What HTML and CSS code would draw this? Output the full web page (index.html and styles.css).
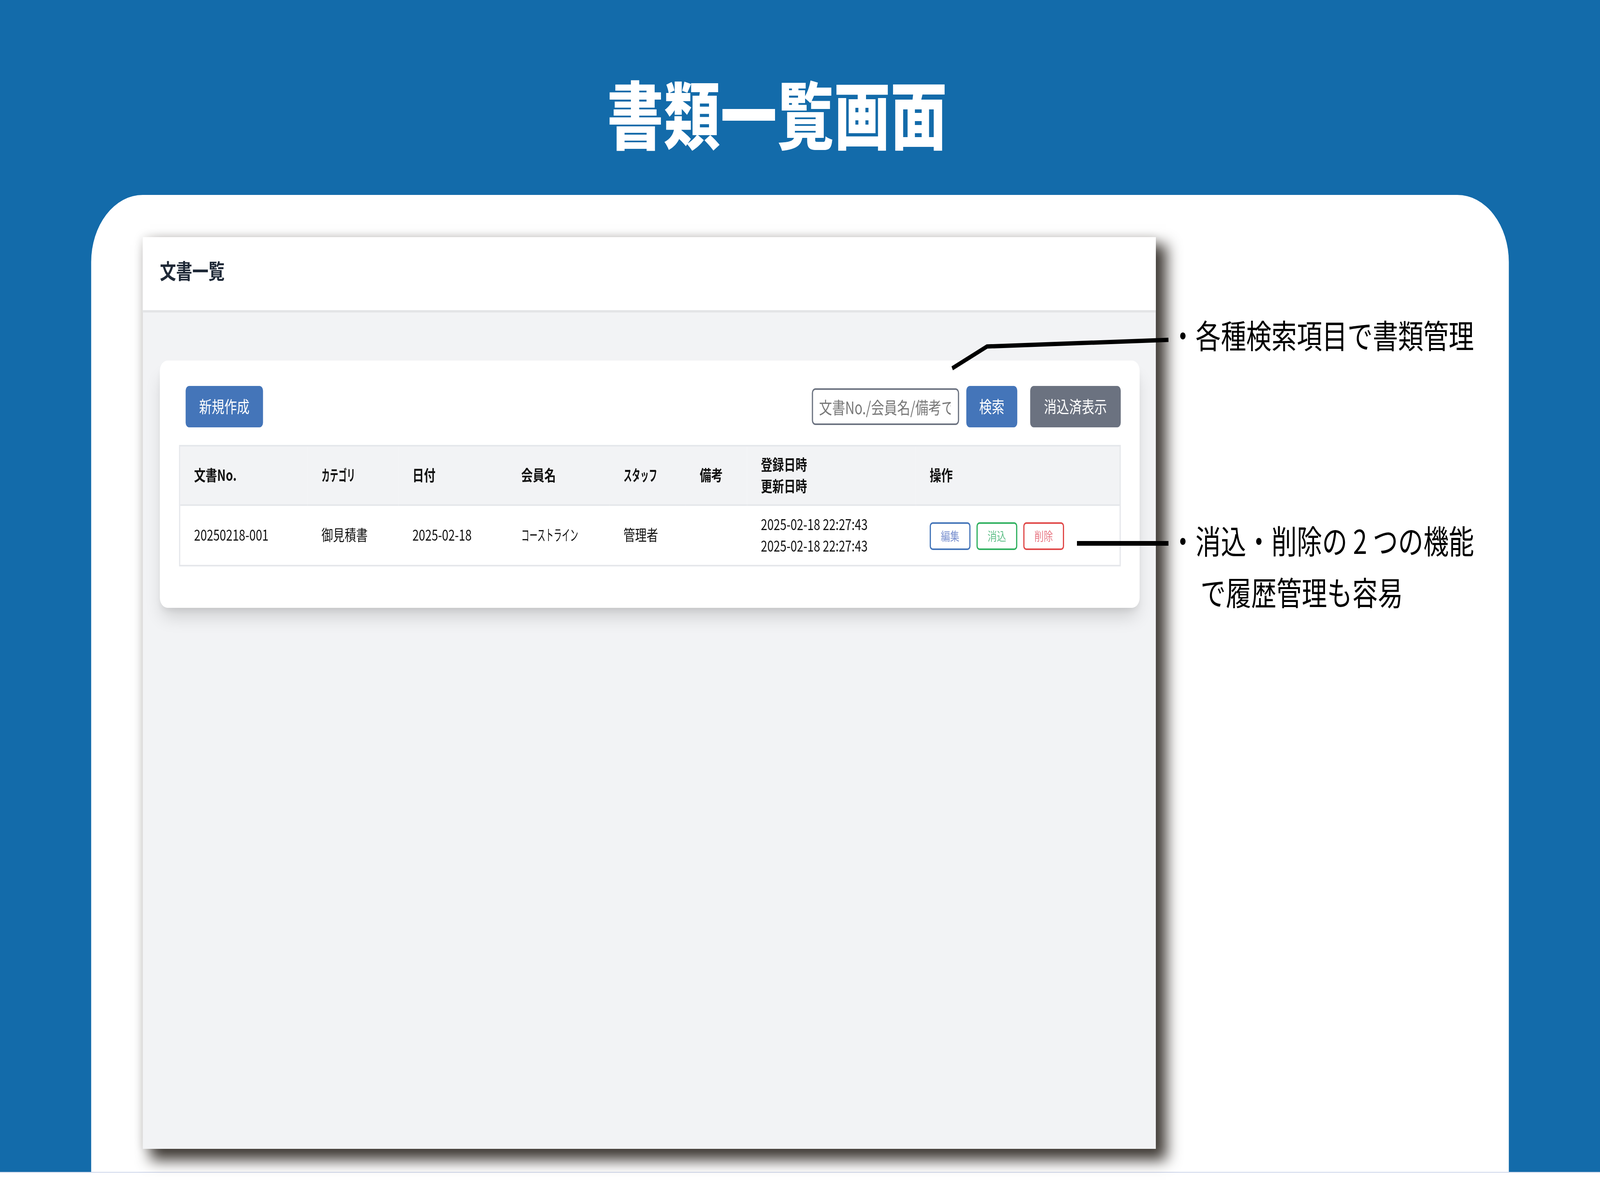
FILE: index.html
```html
<!DOCTYPE html>
<html lang="ja">
<head>
<meta charset="utf-8">
<title>書類一覧画面</title>
<link rel="stylesheet" href="styles.css">
</head>
<body>
<div class="slide">
  <h1 class="slide-title">書類一覧画面</h1>
  <main class="panel">
    <section class="screen">
      <header class="screen-header"><h2 class="screen-title">文書一覧</h2></header>
      <div class="screen-body">
        <div class="card">
          <div class="toolbar">
            <button class="btn btn-primary btn-new">新規作成</button>
            <div class="toolbar-search">
              <input class="search-input" type="text" placeholder="文書No./会員名/備考で検索">
              <button class="btn btn-primary btn-search">検索</button>
              <button class="btn btn-gray btn-cleared">消込済表示</button>
            </div>
          </div>
          <table class="doc-table">
            <colgroup>
              <col class="c1"><col class="c2"><col class="c3"><col class="c4"><col class="c5"><col class="c6"><col class="c7"><col class="c8">
            </colgroup>
            <thead>
              <tr>
                <th>文書No.</th><th><span class="narrow">カテゴリ</span></th><th>日付</th><th>会員名</th><th><span class="narrow">スタッフ</span></th><th>備考</th><th>登録日時<br>更新日時</th><th>操作</th>
              </tr>
            </thead>
            <tbody>
              <tr>
                <td>20250218-001</td><td>御見積書</td><td>2025-02-18</td><td><span class="narrow narrow-name">コーストライン</span></td><td>管理者</td><td></td>
                <td>2025-02-18 22:27:43<br>2025-02-18 22:27:43</td>
                <td>
                  <div class="actions">
                    <button class="act act-edit">編集</button>
                    <button class="act act-clear">消込</button>
                    <button class="act act-del">削除</button>
                  </div>
                </td>
              </tr>
            </tbody>
          </table>
        </div>
      </div>
    </section>
    <aside class="notes">
      <p class="note note-search">・各種検索項目で書類管理</p>
      <p class="note note-history">・消込・削除の 2 つの機能<span class="note-cont">で履歴管理も容易</span></p>
    </aside>
  </main>
  <svg class="callouts" width="5335" height="3031" viewBox="0 0 5335 3031" aria-hidden="true">
    <polyline points="3175,943 3291,887 3896,870" fill="none" stroke="#000" stroke-width="11"/>
    <line x1="3591" y1="1391" x2="3896" y2="1391" stroke="#000" stroke-width="12"/>
  </svg>
</div>
</body>
</html>
```
FILE: styles.css
```css
* { box-sizing: border-box; }
html { overflow: hidden; }
html, body { margin: 0; padding: 0; background: #fff; }
body {
  width: 100vw;
  height: 3031px;
  overflow: hidden;
  font-family: "Noto Sans CJK JP", "Noto Sans", sans-serif;
  color: #111;
}
.slide {
  position: relative;
  width: 5335px;
  height: 3002px;
  background: #136baa;
  border-bottom: 2px solid #cdd5ea;
  display: flex;
  flex-direction: column;
}
/* The browser window is capped below the slide's design width: fit the slide to it. */
@media (max-width: 5000px) {
  .slide {
    transform: scaleX(0.76776);
    transform-origin: 0 0;
  }
}
.slide-title {
  margin: 0;
  height: 499px;
  padding: 70px 152px 0 0;
  display: flex;
  align-items: center;
  justify-content: center;
  font-size: 188px;
  font-weight: 900;
  letter-spacing: 1px;
  line-height: 1;
  color: #fff;
}
.panel {
  flex: 1;
  margin: 0 304px;
  padding: 108px 0 59px 172px;
  background: #fff;
  border-radius: 172px 172px 0 0;
  display: flex;
}
.screen {
  width: 3378px;
  flex: none;
  display: flex;
  flex-direction: column;
  background: #f2f3f5;
  box-shadow: 30px 24px 40px 5px #3f3a35, 0 0 30px rgba(60, 50, 40, 0.12);
  filter: blur(0.7px);
}
.screen-header {
  height: 193px;
  padding: 0 57px 18px;
  display: flex;
  align-items: center;
  background: #fff;
  border-bottom: 6px solid #e3e4e6;
}
.screen-title {
  margin: 0;
  font-size: 54px;
  font-weight: 700;
  line-height: 1;
  color: #1f2937;
}
.screen-body {
  flex: 1;
  padding: 123px 54px 0 57px;
}
.card {
  background: #fff;
  border-radius: 26px;
  padding: 65px 63px 106px 64px;
  box-shadow: 0 34px 51px -10px rgba(0, 0, 0, 0.14), 0 14px 20px -7px rgba(0, 0, 0, 0.07);
}
.toolbar {
  display: flex;
  justify-content: space-between;
  align-items: center;
  padding-left: 22px;
  margin-bottom: 45px;
}
.toolbar-search {
  display: flex;
  align-items: center;
}
.btn {
  height: 106px;
  border: 0;
  border-radius: 12px;
  padding: 0 0 6px;
  font-family: inherit;
  font-size: 42px;
  color: #fff;
}
.btn-primary { background: #4475b9; }
.btn-gray { background: #6b7280; }
.btn-new { width: 258px; }
.btn-search { width: 170px; margin-left: 24px; }
.btn-cleared { width: 302px; margin-left: 43px; }
.search-input {
  width: 491px;
  height: 94px;
  padding: 0 24px 0 20px;
  border: 4px solid #6b7280;
  border-radius: 12px;
  background: #fff;
  font-family: inherit;
  font-size: 43.5px;
  color: #333;
  outline: none;
}
.search-input::placeholder { color: #787878; opacity: 1; }
.doc-table {
  width: 100%;
  table-layout: fixed;
  border-collapse: separate;
  border-spacing: 0;
  border: 4px solid #e5e7eb;
  font-size: 38.5px;
  line-height: 55px;
  color: #111;
}
.c1 { width: 425px; }
.c2 { width: 303px; }
.c3 { width: 363px; }
.c4 { width: 341px; }
.c5 { width: 254px; }
.c6 { width: 204px; }
.c7 { width: 563px; }
.narrow {
  display: inline-block;
  transform: scaleX(0.73);
  transform-origin: 0 50%;
}
.narrow-name { transform: scaleX(0.71); }
.doc-table th {
  height: 152px;
  padding: 0 0 5px 46px;
  text-align: left;
  font-weight: 700;
  background: #f2f3f5;
  border-bottom: 4px solid #e5e7eb;
}
.doc-table td {
  height: 151px;
  padding: 0 0 6px 46px;
  font-weight: 400;
  white-space: nowrap;
}
.actions {
  display: flex;
  gap: 20px;
  padding-top: 10px;
}
.act {
  width: 136px;
  height: 71px;
  padding: 0 0 4px;
  background: #fff;
  border: 4px solid;
  border-radius: 10px;
  font-family: inherit;
  font-size: 31px;
  line-height: 1;
}
.act-edit { border-color: #4475b9; color: #7d93d0; }
.act-clear { border-color: #2fb05f; color: #62c08a; }
.act-del { border-color: #e04848; color: #e87a86; }
.notes {
  margin-left: 48px;
  padding-top: 182px;
}
.note {
  margin: 0;
  font-size: 84.4px;
  line-height: 132px;
  font-weight: 400;
  color: #000;
  white-space: nowrap;
}
.note-history { margin-top: 394px; }
.note-cont {
  display: block;
  padding-left: 101px;
}
.callouts {
  position: absolute;
  left: 0;
  top: 0;
  pointer-events: none;
}
```
